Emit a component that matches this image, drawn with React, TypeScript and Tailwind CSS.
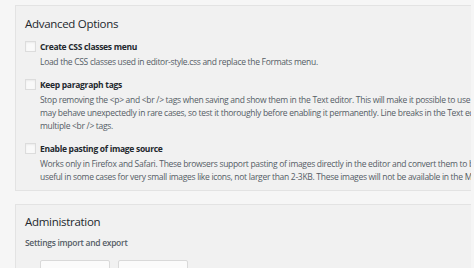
import React from "react";

const font = { fontFamily: '"Open Sans", "Noto Sans", sans-serif' };

function Check() {
  return (
    <div className="w-[11px] h-[11px] shrink-0 border border-[#dcdcdc] bg-[#f9f9f9] shadow-[inset_0_1px_2px_rgba(0,0,0,0.06)] mt-[1px]" />
  );
}

function Option({ label, lines }: { label: string; lines: string[] }) {
  return (
    <div className="flex flex-col">
      <div className="flex items-start gap-[4px]">
        <Check />
        <div className="text-[8.5px] leading-[13px] font-bold tracking-[-0.3px] text-[#23282d] whitespace-nowrap">{label}</div>
      </div>
      <div className="mt-[2px] pl-[15px] flex flex-col">
        {lines.map((l, i) => (
          <div key={i} className="text-[8.5px] leading-[13px] tracking-[-0.3px] text-[#555d66] whitespace-nowrap">
            {l}
          </div>
        ))}
      </div>
    </div>
  );
}

export default function App() {
  return (
    <div className="w-[474px] h-[268px] overflow-hidden bg-[#f6f6f6] pt-[5px] pl-[15px]" style={font}>
      <div className="w-[456px] overflow-hidden border-t border-l border-b border-[#e3e3e3] bg-[#f1f1f1] pl-[9px] pt-[9px] pb-[7px]">
        <div className="text-[11.5px] leading-[18px] tracking-[-0.3px] text-[#23282d]">Advanced Options</div>
        <div className="mt-[7px] flex flex-col gap-[10px]">
          <Option
            label="Create CSS classes menu"
            lines={["Load the CSS classes used in editor-style.css and replace the Formats menu."]}
          />
          <Option
            label="Keep paragraph tags"
            lines={[
              "Stop removing the <p> and <br /> tags when saving and show them in the Text editor. This will make it possible to use more advanced coding in the Text editor",
              "may behave unexpectedly in rare cases, so test it thoroughly before enabling it permanently. Line breaks in the Text editor are still",
              "multiple <br /> tags.",
            ]}
          />
          <Option
            label="Enable pasting of image source"
            lines={[
              "Works only in Firefox and Safari. These browsers support pasting of images directly in the editor and convert them to base64 encoded text.",
              "useful in some cases for very small images like icons, not larger than 2-3KB. These images will not be available in the Media Library.",
            ]}
          />
        </div>
      </div>
      <div className="mt-[13px] w-[456px] h-[80px] border-t border-l border-[#e3e3e3] bg-[#f1f1f1] pl-[9px] pt-[8px]">
        <div className="text-[11.5px] leading-[18px] tracking-[-0.3px] text-[#23282d]">Administration</div>
        <div className="mt-[5px] text-[8.5px] leading-[13px] font-semibold tracking-[-0.3px] text-[#555d66]">Settings import and export</div>
        <div className="mt-[11px] pl-[15px] flex gap-[8px]">
          <div className="w-[70px] h-[20px] bg-[#fbfbfb] border border-[#d9d9d9] rounded-[2px]" />
          <div className="w-[70px] h-[20px] bg-[#fbfbfb] border border-[#d9d9d9] rounded-[2px]" />
        </div>
      </div>
    </div>
  );
}
